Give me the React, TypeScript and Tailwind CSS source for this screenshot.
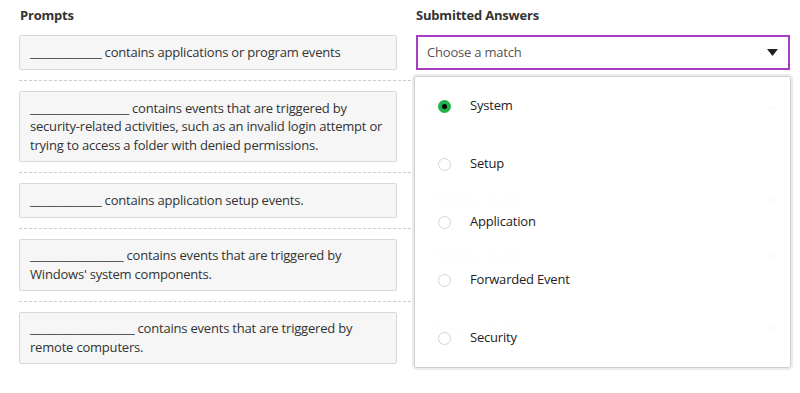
const prompts = [
  { blank: "_____________", text: " contains applications or program events" },
  {
    blank: "__________________",
    text: " contains events that are triggered by security-related activities, such as an invalid login attempt or trying to access a folder with denied permissions.",
  },
  { blank: "_____________", text: " contains application setup events." },
  {
    blank: "_________________",
    text: " contains events that are triggered by Windows' system components.",
  },
  {
    blank: "___________________",
    text: " contains events that are triggered by remote computers.",
  },
];

const options = ["System", "Setup", "Application", "Forwarded Event", "Security"];

const Caret = () => (
  <svg width="11" height="7" viewBox="0 0 11 7" className="shrink-0">
    <path d="M0 0 H11 L5.5 7 Z" fill="#222" />
  </svg>
);

const Dropdown = () => (
  <div className="absolute left-[-2px] top-[41px] z-10 w-[377px] rounded-[3px] border border-[#cfcfcf] bg-white/[0.985] shadow-[0_0_0_2px_#ececec]">
    {options.map((o, i) => (
      <div key={o} className="flex h-[58px] items-center gap-[19px] pl-[23px]">
        {i === 0 ? (
          <span className="flex h-[13px] w-[13px] items-center justify-center rounded-full bg-[#21b24b]">
            <span className="h-[5px] w-[5px] rounded-full bg-black" />
          </span>
        ) : (
          <span className="h-[13px] w-[13px] rounded-full border border-[#d4d4d4] bg-white" />
        )}
        <span className="text-[13px] tracking-[-0.2px] text-[#222]">{o}</span>
      </div>
    ))}
  </div>
);

const App = () => {
  return (
    <div className="h-[393px] w-[800px] bg-white pl-[19px] pr-[10px] font-['Open_Sans',sans-serif] text-[#333]">
      <div className="flex h-[25px] gap-[19px] pt-[6px] text-[13px] font-bold leading-[19px] tracking-[-0.2px]">
        <div className="w-[378px] pl-[1px]">Prompts</div>
        <div className="w-[374px]">Submitted Answers</div>
      </div>

      {prompts.map((p, i) => (
        <div
          key={i}
          className={`flex items-start gap-[19px] py-[10px] ${
            i < prompts.length - 1 ? "border-b border-dashed border-[#cccccc]" : ""
          }`}
        >
          <div className="flex min-h-[35px] w-[378px] items-center rounded-[2px] border border-[#d8d8d8] bg-[#f6f6f6] py-[6.5px] pl-[10px] pr-[6px] text-[13px] leading-[18.5px] tracking-[-0.2px]">
            <p>
              {p.blank}
              {p.text}
            </p>
          </div>
          <div className="relative w-[374px]">
            {i === 0 ? (
              <>
                <div className="flex h-[35px] items-center justify-between border-2 border-[#a63dc2] bg-white pl-[9px] pr-[10px]">
                  <span className="text-[13px] tracking-[-0.2px] text-[#555]">Choose a match</span>
                  <Caret />
                </div>
                <Dropdown />
              </>
            ) : (
              <div className="flex h-[35px] items-center justify-between border border-[#cccccc] bg-white pl-[10px] pr-[11px]">
                <span className="text-[13px] tracking-[-0.2px] text-[#555]">Choose a match</span>
                <Caret />
              </div>
            )}
          </div>
        </div>
      ))}
    </div>
  );
};

export default App;
